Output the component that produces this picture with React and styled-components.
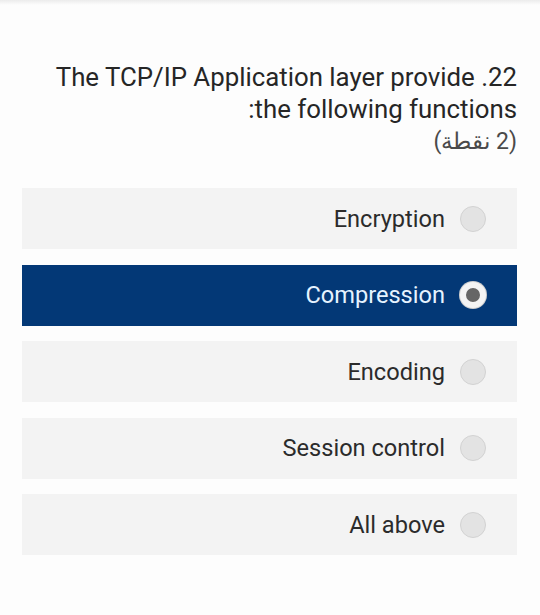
import React, { useState } from "react";
import styled, { createGlobalStyle } from "styled-components";

const GlobalStyle = createGlobalStyle`
  html, body {
    margin: 0;
    padding: 0;
    background: #fdfdfd;
    font-family: Roboto, "Noto Sans", Arial, sans-serif;
  }
`;

const options = ["Encryption", "Compression", "Encoding", "Session control", "All above"];

const App = () => {
  const [selected, setSelected] = useState(1);

  return (
    <>
      <GlobalStyle />
      <TopShade />
      <Page>
        <Question dir="rtl">
          <QuestionLine>22. The TCP/IP Application layer provide</QuestionLine>
          <QuestionLine>the following functions:</QuestionLine>
          <Points>(2 نقطة)</Points>
        </Question>
        <OptionList>
          {options.map((opt, index) => (
            <Option
              key={opt}
              $active={selected === index}
              onClick={() => setSelected(index)}
            >
              <OptionText $active={selected === index}>{opt}</OptionText>
              <Radio $active={selected === index} />
            </Option>
          ))}
        </OptionList>
      </Page>
    </>
  );
};

const TopShade = styled.div`
  height: 5px;
  background: linear-gradient(#ececec, #fdfdfd);
`;

const Page = styled.div`
  padding: 56px 23px 40px 22px;
`;

const Question = styled.div`
  text-align: right;
  color: #262626;
  font-size: 25.8px;
  line-height: 32px;
`;

const QuestionLine = styled.div``;

const Points = styled.div`
  font-size: 23px;
  color: #4a4a4a;
  line-height: 34px;
`;

const OptionList = styled.div`
  margin-top: 29px;
  display: flex;
  flex-direction: column;
  gap: 15.5px;
`;

const Option = styled.div`
  height: 61px;
  display: flex;
  align-items: center;
  justify-content: flex-end;
  padding-right: 31px;
  gap: 15px;
  background: ${(p) => (p.$active ? "#033876" : "#f3f3f3")};
  cursor: pointer;
`;

const OptionText = styled.span`
  font-size: 23.6px;
  color: ${(p) => (p.$active ? "#e6f3ff" : "#2b2b2b")};
`;

const Radio = styled.span`
  box-sizing: border-box;
  width: 26px;
  height: 26px;
  border-radius: 50%;
  background: ${(p) => (p.$active ? "#666" : "#e3e3e3")};
  border: ${(p) => (p.$active ? "6px solid #f4f4f4" : "1px solid #d2d2d2")};
  box-shadow: ${(p) => (p.$active ? "0 0 0 1px #cfcfcf" : "none")};
`;

export default App;
